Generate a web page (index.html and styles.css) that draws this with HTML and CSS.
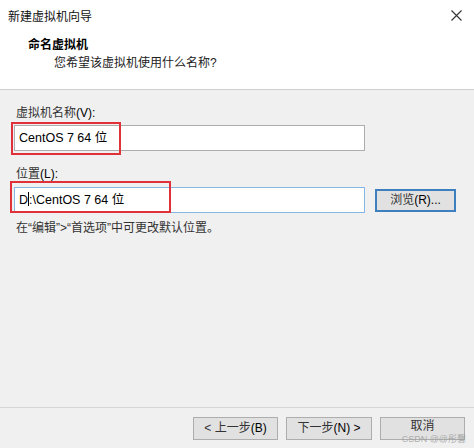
FILE: index.html
```html
<!DOCTYPE html>
<html lang="zh-CN">
<head>
<meta charset="utf-8">
<title>新建虚拟机向导</title>
<link rel="stylesheet" href="styles.css">
</head>
<body>
<div class="dialog">
  <header class="header">
    <div class="titlebar">
      <span class="title">新建虚拟机向导</span>
      <svg class="close" width="11" height="11" viewBox="0 0 11 11"><path d="M0.5 0.5 L10.5 10.5 M10.5 0.5 L0.5 10.5" stroke="#333" stroke-width="1.1" fill="none"/></svg>
    </div>
    <div class="heading">命名虚拟机</div>
    <div class="subtitle">您希望该虚拟机使用什么名称?</div>
  </header>
  <main class="content">
    <div class="label">虚拟机名称<b>(V):</b></div>
    <div class="field-wrap">
      <div class="textbox">CentOS 7 64 位</div>
      <div class="mark mark-name"></div>
    </div>
    <div class="label label-loc">位置<b>(L):</b></div>
    <div class="loc-row">
      <div class="field-wrap">
        <div class="textbox focused">D<span class="caret"></span>:\CentOS 7 64 位</div>
        <div class="mark mark-loc"></div>
      </div>
      <button class="btn btn-default">浏览<b>(R)...</b></button>
    </div>
    <div class="hint">在“编辑”&gt;“首选项”中可更改默认位置。</div>
  </main>
  <footer class="footer">
    <button class="btn nav">&lt; 上一步<b>(B)</b></button>
    <button class="btn nav wide">下一步<b>(N) &gt;</b></button>
    <button class="btn nav cancel"><span class="cancel-label">取消</span><span class="watermark">CSDN @@彤馨</span></button>
  </footer>
</div>
</body>
</html>
```
FILE: styles.css
```css
* { box-sizing: border-box; }
html, body { margin: 0; padding: 0; }
body {
  width: 474px;
  height: 448px;
  overflow: hidden;
  font-family: "Liberation Sans", "Noto Sans CJK SC", sans-serif;
  font-size: 12px;
  color: #1a1a1a;
  background: #f0f0f0;
}
b { font-weight: normal; color: #000; }
.dialog {
  display: flex;
  flex-direction: column;
  height: 448px;
}
.header {
  background: #fff;
  height: 90px;
  border-bottom: 1px solid #cfcfcf;
  flex: none;
}
.titlebar {
  height: 30px;
  display: flex;
  align-items: center;
  justify-content: space-between;
  padding: 0 12px 0 8px;
}
.title { font-size: 12px; color: #111; }
.close { display: block; }
.heading {
  padding-left: 28px;
  margin-top: 7px;
  line-height: 16px;
  font-weight: bold;
  color: #000;
}
.subtitle {
  padding-left: 54px;
  margin-top: 2px;
  line-height: 16px;
  color: #222;
}
.content {
  flex: 1;
  padding: 15px 0 0 14px;
}
.label {
  line-height: 16px;
  padding-left: 2px;
  margin-bottom: 4px;
  color: #333;
}
.label-loc { margin-top: 15px; margin-bottom: 5px; }
.field-wrap { position: relative; width: 351px; }
.textbox {
  height: 26px;
  width: 351px;
  background: #fff;
  border: 1px solid #adadad;
  padding-left: 4px;
  line-height: 24px;
  font-size: 12.5px;
  color: #000;
  white-space: nowrap;
}
.textbox.focused { border-color: #86b6e6; }
.caret {
  display: inline-block;
  width: 1px;
  height: 14px;
  background: #000;
  vertical-align: -2px;
}
.mark {
  position: absolute;
  border: 2px solid #e0303a;
  pointer-events: none;
}
.mark-name { left: -3px; top: -3px; width: 110px; height: 33px; }
.mark-loc { left: -4px; top: -6px; width: 161px; height: 32px; }
.loc-row {
  display: flex;
  align-items: center;
}
.btn {
  font-family: "Liberation Sans", "Noto Sans CJK SC", sans-serif;
  font-size: 12px;
  color: #333;
  background: #e1e1e1;
  border: 1px solid #adadad;
  padding: 0;
  height: 23px;
  line-height: 21px;
  margin: 0;
}
.btn-default {
  margin-left: 10px;
  width: 81px;
  border: 2px solid #3d7fbf;
  line-height: 19px;
}
.hint {
  line-height: 16px;
  margin-top: 7px;
  padding-left: 2px;
  color: #333;
}
.footer {
  flex: none;
  height: 41px;
  border-top: 1px solid #d6d6d6;
  display: flex;
  justify-content: flex-end;
  gap: 8px;
  padding: 9px 9px 0 0;
}
.nav { width: 85px; }
.nav.wide { width: 86px; }
.cancel { position: relative; }
.cancel-label { position: relative; top: -2px; }
.watermark {
  position: absolute;
  right: -2px;
  bottom: -5px;
  font-size: 9px;
  line-height: 10px;
  color: rgba(150,150,150,0.75);
  white-space: nowrap;
}
```
